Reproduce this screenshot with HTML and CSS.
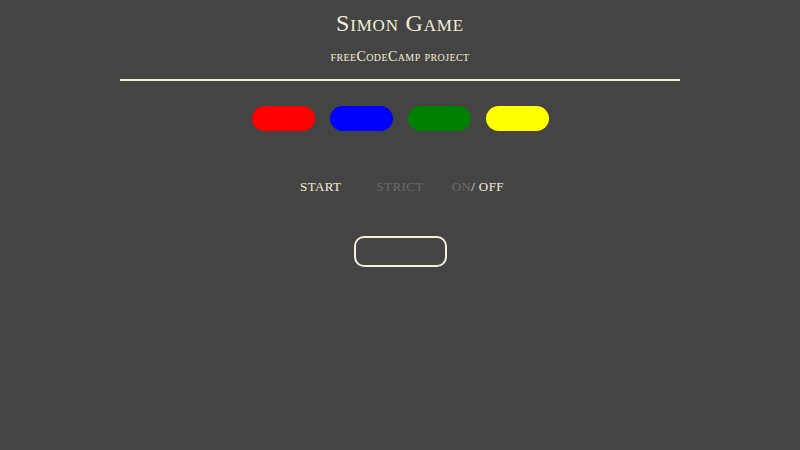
FILE: index.html
```html
<!DOCTYPE html>
<html lang="en">
<head>
  <meta charset="UTF-8">
  <meta name="viewport" content="width=device-width, initial-scale=1.0">
  <title>Simon Game</title>
  <link rel="stylesheet" href="styles.css">
</head>
<body>
  <header class="header">
    <h1 class="title">Simon Game</h1>
    <h2 class="subtitle">freeCodeCamp project</h2>
  </header>
  <hr class="divider">

  <div class="pads">
    <button class="pad red"></button>
    <button class="pad blue"></button>
    <button class="pad green"></button>
    <button class="pad yellow"></button>
  </div>

  <div class="controls">
    <span class="control start">START</span>
    <span class="control strict off">STRICT</span>
    <span class="control power"><span class="off">ON</span>/ OFF</span>
  </div>

  <div class="display"></div>
</body>
</html>
```

FILE: styles.css
```css
body {
  background: #444444;
  color: #f4f0d6;
  font-family: 'Liberation Serif', serif;
  margin: 0;
  text-align: center;
}

.header {
  padding-top: 10px;
}

.title {
  font-size: 24px;
  font-weight: normal;
  font-variant: small-caps;
  margin: 0;
  line-height: 26px;
  letter-spacing: 0.8px;
}

.subtitle {
  font-size: 14px;
  font-weight: normal;
  font-variant: small-caps;
  margin: 14px 0 0;
  line-height: 14px;
  letter-spacing: 0.4px;
}

.divider {
  width: 560px;
  margin: 15px auto 0;
  border: none;
  border-top: 2px solid #f4f0d6;
}

.pads {
  display: flex;
  justify-content: center;
  gap: 15px;
  margin-top: 25px;
}

.pad {
  width: 63px;
  height: 25px;
  border: none;
  border-radius: 13px;
  padding: 0;
}

.red { background: #ff0000; }
.blue { background: #0000ff; }
.green { background: #008000; }
.yellow { background: #ffff00; }

.controls {
  display: flex;
  justify-content: center;
  margin-top: 48px;
  font-size: 13px;
  line-height: 16px;
  padding-left: 4px;
  letter-spacing: 0.4px;
}

.strict {
  margin-left: 35px;
  margin-right: 28px;
}

.off {
  color: #6a6a6a;
}

.display {
  width: 89px;
  height: 27px;
  border: 2px solid #f4f0d6;
  border-radius: 10px;
  margin: 41px auto 0;
}
```
